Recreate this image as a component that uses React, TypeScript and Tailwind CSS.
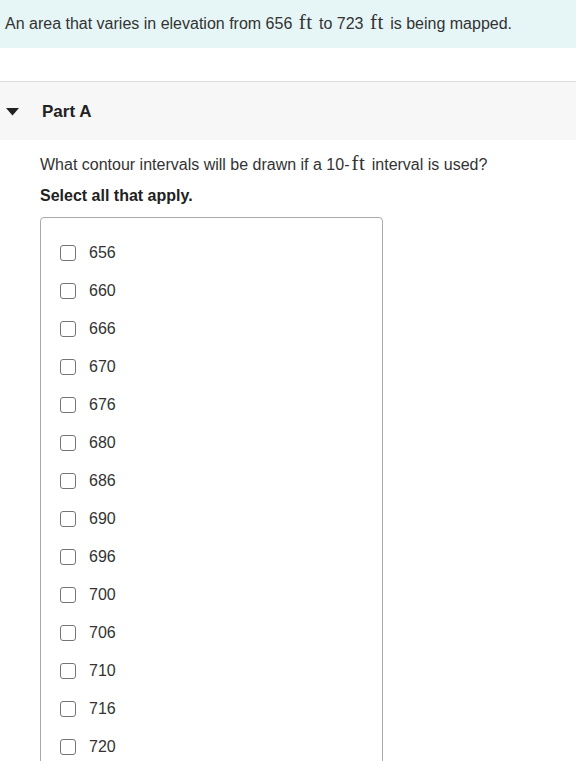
const options = [
  "656", "660", "666", "670", "676", "680", "686",
  "690", "696", "700", "706", "710", "716", "720",
];

const ft = (
  <span className="mx-[2px] font-['Liberation_Serif',serif] text-[21px] leading-[0] tracking-[0.5px]">
    ft
  </span>
);

export default function App() {
  return (
    <div className="min-h-[761px] bg-white font-['Liberation_Sans',Arial,sans-serif] text-[#333]">
      <div className="h-[48px] bg-[#e6f6f6] pl-[5px] pt-[14px] text-[16px] leading-5">
        An area that varies in elevation from 656 {ft} to 723 {ft} is being mapped.
      </div>

      <div className="mt-[33px] border-t border-[#dddddd]">
        <div className="flex h-[58px] items-center bg-[#f7f7f7]">
          <svg width="13" height="8" viewBox="0 0 13 8" className="ml-[6px] mt-[1px]">
            <path d="M0 0h13L6.5 7.5z" fill="#222" />
          </svg>
          <span className="ml-[23px] mt-[2px] text-[17px] font-bold text-[#222]">Part A</span>
        </div>

        <div className="px-[40px] pt-[15px]">
          <p className="text-[16px] leading-5">
            What contour intervals will be drawn if a 10-{ft} interval is used?
          </p>
          <p className="mt-[11px] text-[16px] font-bold leading-5 text-[#222]">
            Select all that apply.
          </p>

          <div className="mt-[11px] w-[343px] rounded-[4px] border border-[#aaaaaa] px-[19px] pt-[16px] pb-4">
            <div className="flex flex-col">
              {options.map((o) => (
                <label key={o} className="flex h-[38px] items-center">
                  <span className="h-[16px] w-[16px] rounded-[3px] border border-[#767676] bg-white" />
                  <span className="ml-[13px] text-[16px] text-[#333]">{o}</span>
                </label>
              ))}
            </div>
          </div>
        </div>
      </div>
    </div>
  );
}
